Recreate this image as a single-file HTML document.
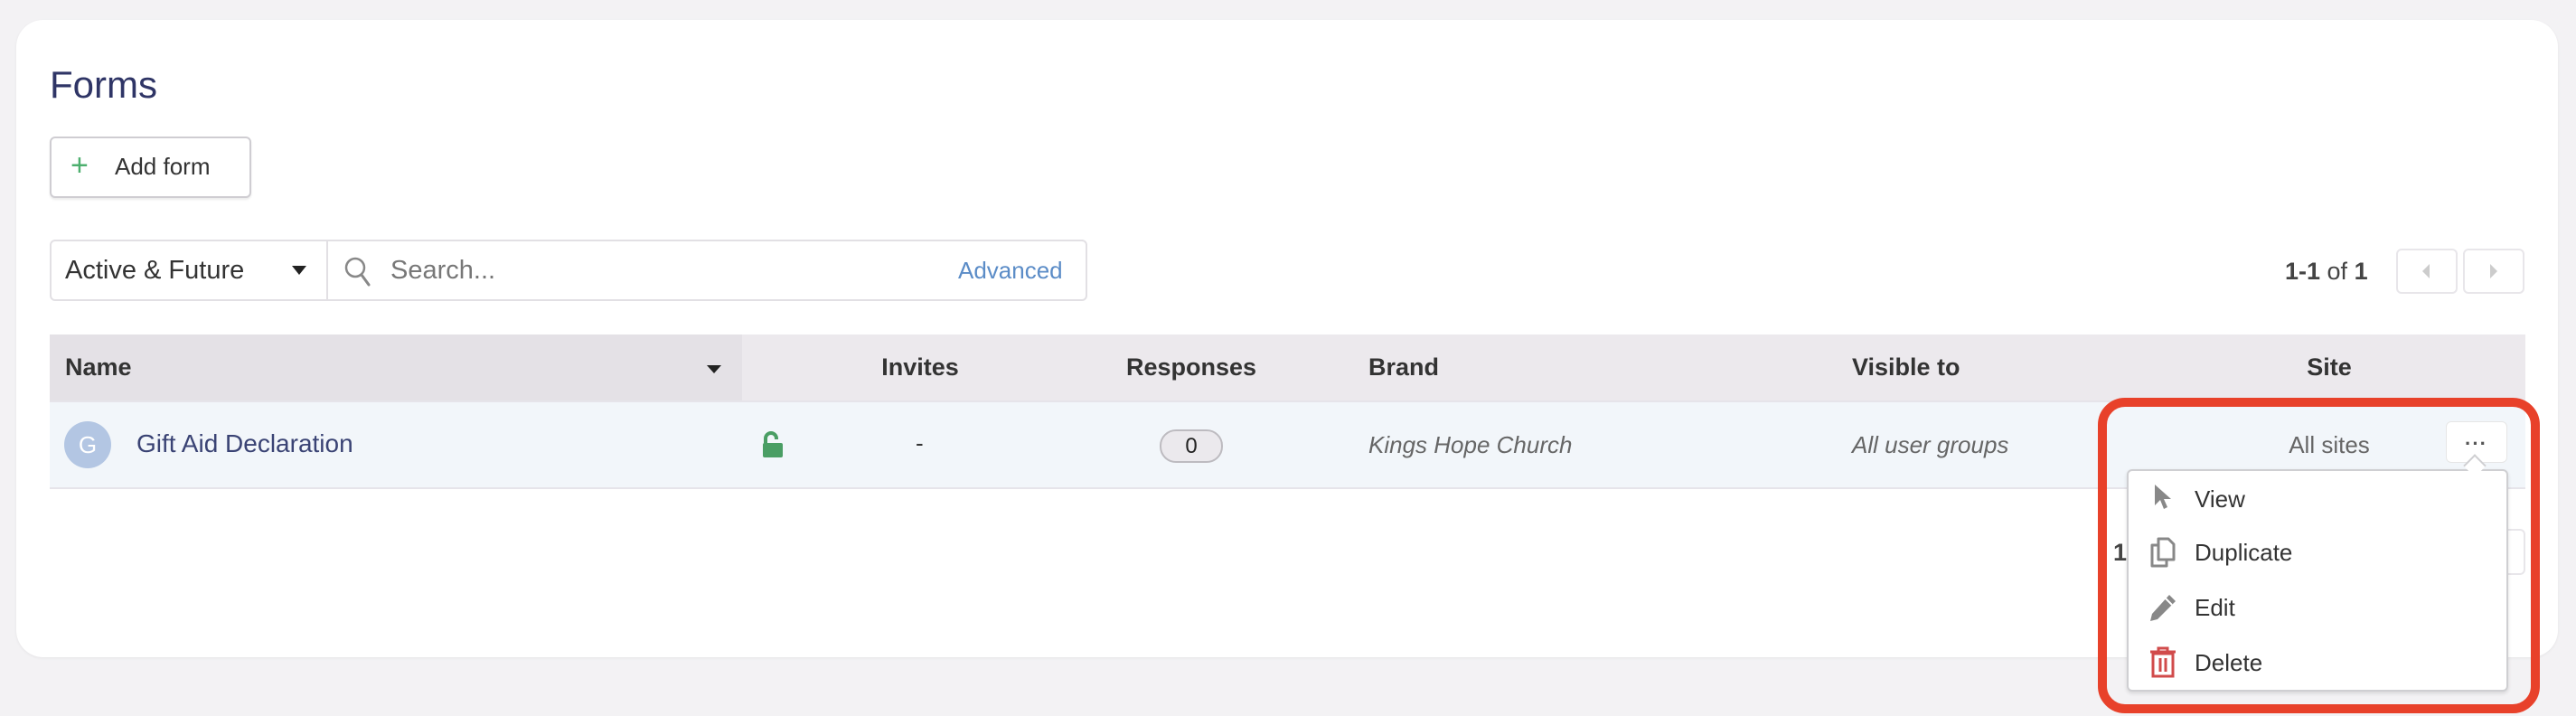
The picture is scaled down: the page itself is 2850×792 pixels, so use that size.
<!DOCTYPE html>
<html><head><meta charset="utf-8"><style>
*{box-sizing:border-box;margin:0;padding:0}
body{width:2850px;height:792px;background:#f3f2f4;font-family:"Liberation Sans",Arial,sans-serif;position:relative;overflow:hidden;color:#333}
.a{position:absolute}
.card{left:18px;top:22px;width:2812px;height:705px;background:#fff;border-radius:30px;box-shadow:0 1px 3px rgba(0,0,0,.06)}
.t{font-size:26px;white-space:nowrap}
.h{font-size:27px;font-weight:bold;color:#333;white-space:nowrap}
.it{font-style:italic;color:#666}
</style></head><body>
<div class="a card"></div>
<div class="a" style="left:55px;top:70px;font-size:42px;color:#2f3566">Forms</div>
<div class="a" style="left:55px;top:151px;width:223px;height:68px;border:2px solid #cfcdd2;border-radius:6px;background:#fff;box-shadow:0 2px 2px rgba(0,0,0,.08)"></div>
<div class="a" style="left:78px;top:164px;font-size:34px;color:#4caf6e">+</div>
<div class="a t" style="left:127px;top:169px;color:#333">Add form</div>
<div class="a" style="left:55px;top:265px;width:1148px;height:68px;border:2px solid #e2e0e4;border-radius:6px;background:#fff"></div>
<div class="a" style="left:361px;top:267px;width:2px;height:64px;background:#e2e0e4"></div>
<div class="a t" style="left:72px;top:283px;font-size:29px">Active &amp; Future</div>
<div class="a" style="left:323px;top:294px;width:0;height:0;border-left:8px solid transparent;border-right:8px solid transparent;border-top:10px solid #222"></div>
<svg class="a" style="left:380px;top:283px" width="34" height="36" viewBox="0 0 34 36"><circle cx="13" cy="13" r="10" fill="none" stroke="#888" stroke-width="2.5"/><path d="M20 21L28 32" stroke="#888" stroke-width="3" stroke-linecap="round"/></svg>
<div class="a t" style="left:432px;top:283px;font-size:29px;color:#777">Search...</div>
<div class="a t" style="left:1060px;top:284px;color:#5b8cc7">Advanced</div>
<div class="a t" style="left:2528px;top:285px;font-size:27px;color:#444"><b>1-1</b> of <b>1</b></div>
<div class="a" style="left:2651px;top:275px;width:68px;height:50px;border:2px solid #e8e6ea;border-radius:6px"></div>
<div class="a" style="left:2680px;top:292px;border-top:8px solid transparent;border-bottom:8px solid transparent;border-right:8px solid #ccc"></div>
<div class="a" style="left:2725px;top:275px;width:68px;height:50px;border:2px solid #e8e6ea;border-radius:6px"></div>
<div class="a" style="left:2755px;top:292px;border-top:8px solid transparent;border-bottom:8px solid transparent;border-left:8px solid #ccc"></div>
<!-- table header -->
<div class="a" style="left:55px;top:370px;width:2739px;height:73px;background:#ece9ed"></div>
<div class="a" style="left:55px;top:370px;width:766px;height:73px;background:#e4e1e6"></div>
<div class="a h" style="left:72px;top:391px">Name</div>
<div class="a" style="left:782px;top:404px;border-left:8px solid transparent;border-right:8px solid transparent;border-top:9px solid #222"></div>
<div class="a h" style="left:1018px;top:391px;transform:translateX(-50%)">Invites</div>
<div class="a h" style="left:1318px;top:391px;transform:translateX(-50%)">Responses</div>
<div class="a h" style="left:1514px;top:391px">Brand</div>
<div class="a h" style="left:2049px;top:391px">Visible to</div>
<div class="a h" style="left:2577px;top:391px;transform:translateX(-50%)">Site</div>
<!-- row -->
<div class="a" style="left:55px;top:443px;width:2739px;height:98px;background:#f2f6fa;border-top:2px solid #e6e4ea;border-bottom:2px solid #e6e4ea"></div>
<div class="a" style="left:71px;top:466px;width:52px;height:52px;border-radius:50%;background:#b3c6e3;color:#fff;font-size:26px;text-align:center;line-height:52px">G</div>
<div class="a t" style="left:151px;top:475px;font-size:28px;color:#3a4374">Gift Aid Declaration</div>
<svg class="a" style="left:842px;top:477px" width="26" height="30" viewBox="0 0 26 30"><path d="M5 14V8a6 6 0 0 1 12 0v1" fill="none" stroke="#4a9e64" stroke-width="4"/><rect x="2" y="13" width="22" height="16" rx="2" fill="#4a9e64"/></svg>
<div class="a t" style="left:1013px;top:475px">-</div>
<div class="a" style="left:1283px;top:475px;width:70px;height:37px;border-radius:18px;background:#ebe9ed;border:2px solid #bdbbc0;text-align:center;font-size:24px;line-height:33px;color:#222">0</div>
<div class="a t it" style="left:1514px;top:477px">Kings Hope Church</div>
<div class="a t it" style="left:2049px;top:477px">All user groups</div>
<div class="a t" style="left:2577px;top:477px;transform:translateX(-50%);color:#666">All sites</div>
<div class="a" style="left:2706px;top:466px;width:68px;height:46px;background:#fff;border-radius:6px;border:1px solid #e6e6e6"></div>
<div class="a" style="left:2727px;top:478px;font-size:22px;letter-spacing:1px;color:#555;font-weight:bold">···</div>
<!-- behind menu -->
<div class="a t" style="left:2338px;top:596px;font-weight:bold;font-size:27px;color:#444">1</div>
<div class="a" style="left:2760px;top:585px;width:34px;height:51px;border:2px solid #e8e6ea;border-radius:6px"></div>
<!-- menu -->
<div class="a" style="left:2353px;top:519px;width:422px;height:246px;background:#fff;border:2px solid #cfcfd2;border-radius:6px;box-shadow:0 2px 4px rgba(0,0,0,.12)"></div>
<div class="a" style="left:2729px;top:506px;width:18px;height:18px;background:#fff;border-left:2px solid #cfcfd2;border-top:2px solid #cfcfd2;transform:rotate(45deg)"></div>
<svg class="a" style="left:2382px;top:535px" width="22" height="30" viewBox="0 0 22 30"><path d="M2 1V24L8 18L12 28L16 26L12 17H20Z" fill="#888"/></svg>
<div class="a t" style="left:2428px;top:537px">View</div>
<svg class="a" style="left:2377px;top:593px" width="32" height="36" viewBox="0 0 32 36"><path d="M11 3H22L28 9V26H11Z" fill="none" stroke="#888" stroke-width="3" stroke-linejoin="round"/><path d="M11 10H4V33H20V26" fill="none" stroke="#888" stroke-width="3" stroke-linejoin="round"/></svg>
<div class="a t" style="left:2428px;top:596px">Duplicate</div>
<svg class="a" style="left:2376px;top:655px" width="34" height="34" viewBox="0 0 34 34"><path d="M24 3L31 10L11 30L3 32L5 24Z" fill="#888"/><path d="M20 7L27 14" stroke="#fff" stroke-width="2"/></svg>
<div class="a t" style="left:2428px;top:657px">Edit</div>
<svg class="a" style="left:2377px;top:714px" width="32" height="36" viewBox="0 0 32 36"><path d="M2 7H30M11 7V3H21V7" fill="none" stroke="#d14b4b" stroke-width="3"/><rect x="5" y="9" width="22" height="25" fill="none" stroke="#d14b4b" stroke-width="3"/><path d="M13 14V29M19 14V29" stroke="#d14b4b" stroke-width="3"/></svg>
<div class="a t" style="left:2428px;top:718px">Delete</div>
<!-- red highlight -->
<div class="a" style="left:2321px;top:440px;width:489px;height:349px;border:10px solid #e8412a;border-radius:30px"></div>
</body></html>
